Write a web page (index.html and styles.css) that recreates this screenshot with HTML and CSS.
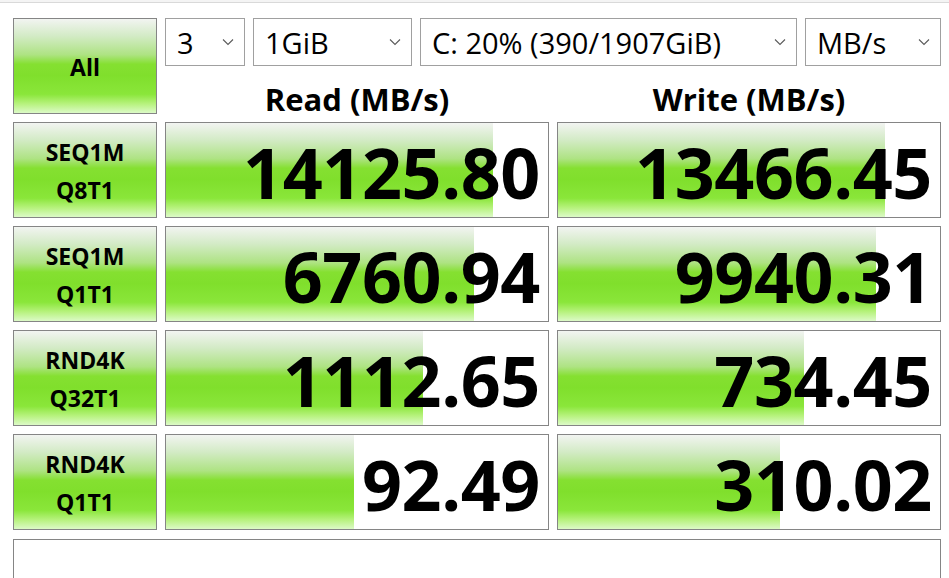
FILE: index.html
```html
<!DOCTYPE html>
<html>
<head>
<meta charset="utf-8">
<link rel="stylesheet" href="styles.css">
</head>
<body>
<div class="topline"></div>
<div class="app">
  <div class="grid">
    <div class="btn btn-all">All</div>
    <div class="head">
      <div class="selects">
        <div class="sel s1"><span>3</span><svg class="chev" viewBox="0 0 12 8"><path d="M1 1.5 L6 6.5 L11 1.5" /></svg></div>
        <div class="sel s2"><span>1GiB</span><svg class="chev" viewBox="0 0 12 8"><path d="M1 1.5 L6 6.5 L11 1.5" /></svg></div>
        <div class="sel s3"><span>C: 20% (390/1907GiB)</span><svg class="chev" viewBox="0 0 12 8"><path d="M1 1.5 L6 6.5 L11 1.5" /></svg></div>
        <div class="sel s4"><span>MB/s</span><svg class="chev" viewBox="0 0 12 8"><path d="M1 1.5 L6 6.5 L11 1.5" /></svg></div>
      </div>
      <div class="titles">
        <div class="title">Read (MB/s)</div>
        <div class="title">Write (MB/s)</div>
      </div>
    </div>

    <div class="btn"><span>SEQ1M</span><span>Q8T1</span></div>
    <div class="cell"><div class="bar" style="width:327px"></div><div class="val">14125.80</div></div>
    <div class="cell"><div class="bar" style="width:327px"></div><div class="val">13466.45</div></div>

    <div class="btn"><span>SEQ1M</span><span>Q1T1</span></div>
    <div class="cell"><div class="bar" style="width:308px"></div><div class="val">6760.94</div></div>
    <div class="cell"><div class="bar" style="width:318px"></div><div class="val">9940.31</div></div>

    <div class="btn"><span>RND4K</span><span>Q32T1</span></div>
    <div class="cell"><div class="bar" style="width:257px"></div><div class="val">1112.65</div></div>
    <div class="cell"><div class="bar" style="width:246px"></div><div class="val">734.45</div></div>

    <div class="btn"><span>RND4K</span><span>Q1T1</span></div>
    <div class="cell"><div class="bar" style="width:188px"></div><div class="val">92.49</div></div>
    <div class="cell"><div class="bar" style="width:222px"></div><div class="val">310.02</div></div>
  </div>
  <div class="comment"></div>
</div>
</body>
</html>
```
FILE: styles.css
```css
html, body {
  margin: 0;
  padding: 0;
  background: #ffffff;
  font-family: "Open Sans", "Noto Sans", "Liberation Sans", sans-serif;
  color: #000;
  overflow: hidden;
}
.topline {
  height: 2px;
  background: #f4f4f4;
  border-bottom: 1px solid #d9d9d9;
}
.app {
  padding: 15px 0 0 13px;
}
.grid {
  display: grid;
  grid-template-columns: 144px 384px 384px;
  grid-auto-rows: 96px;
  column-gap: 8px;
  row-gap: 8px;
}
.btn, .bar {
  background: linear-gradient(to bottom,
    #f2f4f1 0%,
    #d3ebc6 18%,
    #aee383 38%,
    #85e031 48%,
    #80df2c 60%,
    #8ae63a 80%,
    #b6f27c 90%,
    #dcfac7 100%);
}
.btn {
  box-sizing: border-box;
  border: 1px solid #858585;
  display: flex;
  flex-direction: column;
  align-items: center;
  justify-content: center;
  font-weight: 700;
  font-size: 23px;
  line-height: 38px;
  padding-top: 1px;
}
.head {
  grid-column: 2 / 4;
  display: flex;
  flex-direction: column;
}
.selects {
  display: flex;
  gap: 8px;
  height: 48px;
}
.sel {
  box-sizing: border-box;
  height: 48px;
  border: 1px solid #a0a0a0;
  display: flex;
  align-items: center;
  justify-content: space-between;
  padding: 0 10px 0 11px;
  font-size: 29px;
  background: #fff;
}
.sel span {
  line-height: 1;
  margin-top: 1px;
}
.s1 { width: 80px; }
.s2 { width: 159px; }
.s3 { width: 377px; }
.s4 { width: 136px; }
.chev {
  width: 12px;
  height: 8px;
  fill: none;
  stroke: #5a5a5a;
  stroke-width: 1.1;
}
.titles {
  display: flex;
  gap: 8px;
  height: 48px;
}
.title {
  width: 384px;
  text-align: center;
  font-weight: 700;
  font-size: 31px;
  line-height: 1;
  padding-top: 18px;
}
.cell {
  box-sizing: border-box;
  border: 1px solid #858585;
  position: relative;
  background: #fff;
  display: flex;
  align-items: center;
  justify-content: flex-end;
}
.bar {
  position: absolute;
  left: 0;
  top: 0;
  bottom: 0;
}
.val {
  position: relative;
  font-weight: 700;
  font-size: 70px;
  line-height: 1;
  padding-right: 8px;
  margin-top: 3px;
  letter-spacing: -0.4px;
}
.comment {
  box-sizing: border-box;
  width: 928px;
  height: 60px;
  margin-top: 9px;
  border: 1px solid #858585;
  background: #fff;
}
```
